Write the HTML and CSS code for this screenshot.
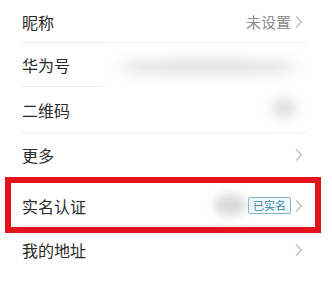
FILE: index.html
```html
<!DOCTYPE html>
<html lang="zh">
<head>
<meta charset="utf-8">
<link rel="stylesheet" href="styles.css">
</head>
<body>
<div class="page">
  <div class="list">
    <div class="row r1">
      <span class="label">昵称</span>
      <span class="right"><span class="value">未设置</span><svg class="chev" viewBox="0 0 8 14" width="8" height="14"><path d="M1 1.5 L6.5 7 L1 12.5" /></svg></span>
    </div>
    <div class="row r2">
      <span class="label">华为号</span>
    </div>
    <div class="row r3">
      <span class="label">二维码</span>
    </div>
    <div class="row r4">
      <span class="label">更多</span>
      <span class="right"><svg class="chev" viewBox="0 0 8 14" width="8" height="14"><path d="M1 1.5 L6.5 7 L1 12.5" /></svg></span>
    </div>
    <div class="row r5">
      <span class="label">实名认证</span>
      <span class="right"><span class="badge">已实名</span><svg class="chev" viewBox="0 0 8 14" width="8" height="14"><path d="M1 1.5 L6.5 7 L1 12.5" /></svg></span>
    </div>
    <div class="row r6">
      <span class="label">我的地址</span>
      <span class="right"><svg class="chev" viewBox="0 0 8 14" width="8" height="14"><path d="M1 1.5 L6.5 7 L1 12.5" /></svg></span>
    </div>
  </div>
  <div class="mask mask-id"><div class="smudge smudge-id"></div></div>
  <div class="smudge smudge-qr"></div>
  <div class="smudge smudge-name"></div>
  <div class="highlight"></div>
</div>
</body>
</html>
```
FILE: styles.css
```css
html, body {
  margin: 0;
  padding: 0;
  background: #ffffff;
}
.page {
  position: relative;
  width: 332px;
  height: 303px;
  overflow: hidden;
  font-family: "Noto Sans CJK SC", "Noto Sans", sans-serif;
  background: #ffffff;
}
.list {
  display: flex;
  flex-direction: column;
  padding: 0 25px 0 22px;
}
.row {
  box-sizing: border-box;
  display: flex;
  align-items: center;
  justify-content: space-between;
  border-bottom: 1px solid #ededed;
  padding: 1px 4px 0 0;
}
.r1 { height: 43px; }
.r2 { height: 44px; }
.r3 { height: 46px; }
.r4 { height: 45px; padding-top: 0; }
.r5 { height: 48px; padding-top: 8px; }
.r6 { height: 46px; border-bottom: none; padding-top: 1px; }
.label {
  font-size: 16px;
  color: #2a2a2a;
  line-height: 20px;
}
.right {
  display: flex;
  align-items: center;
  gap: 4px;
}
.value {
  font-size: 15px;
  color: #8c8c8c;
  line-height: 20px;
}
.chev {
  display: block;
}
.chev path {
  fill: none;
  stroke: #bdbdbd;
  stroke-width: 1.2;
}
.badge {
  box-sizing: border-box;
  height: 17px;
  padding: 0 4px;
  border: 1px solid #7eb2cc;
  border-radius: 2px;
  background: #f1f8fb;
  color: #3b88ad;
  font-size: 11px;
  line-height: 15px;
}
.mask {
  position: absolute;
  left: 104px;
  top: 45px;
  width: 208px;
  height: 46px;
  background: #ffffff;
  filter: blur(2px);
}
.smudge {
  position: absolute;
  border-radius: 50%;
  filter: blur(6px);
}
.smudge-id {
  left: 12px;
  top: 14px;
  width: 184px;
  height: 16px;
  background: #e2e2e2;
}
.smudge-qr {
  left: 272px;
  top: 98px;
  width: 24px;
  height: 20px;
  background: #dedede;
}
.smudge-name {
  left: 214px;
  top: 194px;
  width: 32px;
  height: 22px;
  background: #dadada;
  filter: blur(5px);
}
.highlight {
  position: absolute;
  left: 5px;
  top: 177px;
  width: 316px;
  height: 56px;
  box-sizing: border-box;
  border: 6px solid #e3141c;
}
```
